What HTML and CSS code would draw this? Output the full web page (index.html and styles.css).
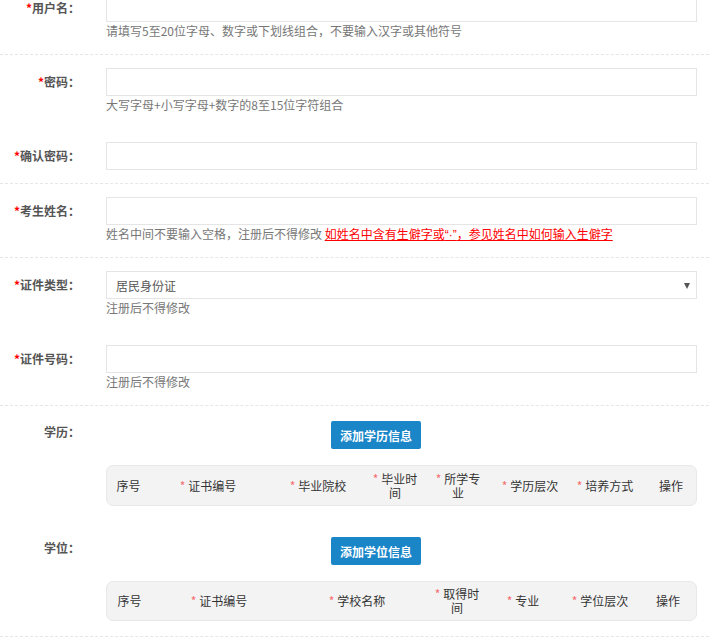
FILE: index.html
```html
<!DOCTYPE html>
<html lang="zh-CN">
<head>
    <meta charset="UTF-8">
    <meta name="viewport" content="width=device-width, initial-scale=1.0">
    <title>考生注册</title>
    <link rel="stylesheet" href="styles.css">
</head>
<body>
    <form class="reg-form">
        <div class="form-group">
            <div class="form-item">
                <label class="form-label"><span class="req">*</span>用户名：</label>
                <div class="form-field">
                    <input type="text" class="form-input">
                    <div class="form-hint">请填写5至20位字母、数字或下划线组合，不要输入汉字或其他符号</div>
                </div>
            </div>
        </div>

        <div class="form-group">
            <div class="form-item">
                <label class="form-label"><span class="req">*</span>密码：</label>
                <div class="form-field">
                    <input type="password" class="form-input">
                    <div class="form-hint">大写字母+小写字母+数字的8至15位字符组合</div>
                </div>
            </div>
            <div class="form-item">
                <label class="form-label"><span class="req">*</span>确认密码：</label>
                <div class="form-field">
                    <input type="password" class="form-input">
                </div>
            </div>
        </div>

        <div class="form-group">
            <div class="form-item">
                <label class="form-label"><span class="req">*</span>考生姓名：</label>
                <div class="form-field">
                    <input type="text" class="form-input">
                    <div class="form-hint">姓名中间不要输入空格，注册后不得修改 <a href="#" class="hint-link">如姓名中含有生僻字或<span class="quote">“·”</span>，参见姓名中如何输入生僻字</a></div>
                </div>
            </div>
        </div>

        <div class="form-group">
            <div class="form-item">
                <label class="form-label"><span class="req">*</span>证件类型：</label>
                <div class="form-field">
                    <div class="select-wrap">
                        <select class="form-input form-select">
                            <option>居民身份证</option>
                            <option>护照</option>
                            <option>港澳台居民居住证</option>
                        </select>
                        <span class="select-arrow"></span>
                    </div>
                    <div class="form-hint">注册后不得修改</div>
                </div>
            </div>
            <div class="form-item">
                <label class="form-label"><span class="req">*</span>证件号码：</label>
                <div class="form-field">
                    <input type="text" class="form-input">
                    <div class="form-hint">注册后不得修改</div>
                </div>
            </div>
        </div>

        <div class="form-group form-group-edu">
            <div class="form-item form-item-edu">
                <label class="form-label">学历：</label>
                <div class="form-field">
                    <button type="button" class="add-button">添加学历信息</button>
                    <div class="info-table edu-table">
                        <div class="cell"><span>序号</span></div>
                        <div class="cell"><span><span class="star">*</span> 证书编号</span></div>
                        <div class="cell"><span><span class="star">*</span> 毕业院校</span></div>
                        <div class="cell cell-narrow"><span><span class="star">*</span> 毕业时间</span></div>
                        <div class="cell cell-major"><span><span class="star">*</span> 所学专业</span></div>
                        <div class="cell"><span><span class="star">*</span> 学历层次</span></div>
                        <div class="cell"><span><span class="star">*</span> 培养方式</span></div>
                        <div class="cell"><span>操作</span></div>
                    </div>
                </div>
            </div>
            <div class="form-item">
                <label class="form-label">学位：</label>
                <div class="form-field">
                    <button type="button" class="add-button">添加学位信息</button>
                    <div class="info-table degree-table">
                        <div class="cell"><span>序号</span></div>
                        <div class="cell"><span><span class="star">*</span> 证书编号</span></div>
                        <div class="cell"><span><span class="star">*</span> 学校名称</span></div>
                        <div class="cell cell-time"><span><span class="star">*</span> 取得时间</span></div>
                        <div class="cell"><span><span class="star">*</span> 专业</span></div>
                        <div class="cell"><span><span class="star">*</span> 学位层次</span></div>
                        <div class="cell"><span>操作</span></div>
                    </div>
                </div>
            </div>
        </div>
    </form>
</body>
</html>
```

FILE: styles.css
```css
body {
    margin: 0;
    padding: 0;
    background-color: #fff;
    font-family: "Microsoft YaHei", "Noto Sans CJK SC", "Noto Sans", sans-serif;
    font-size: 12px;
    color: #555;
}
.reg-form {
    width: 709px;
    margin-top: -6px;
}
.form-group {
    padding: 13px 12px 13px 0;
    border-bottom: 1px dashed #e6e6e6;
}
.form-group:first-child {
    padding-top: 0;
}
.form-group-edu {
    padding-top: 15px;
    padding-bottom: 15px;
}
.form-group-edu .form-label {
    line-height: 22px;
}
.form-item {
    display: flex;
    align-items: flex-start;
}
.form-item + .form-item {
    margin-top: 28px;
}
.form-item-edu + .form-item {
    margin-top: 31px;
}
.form-item:last-child .form-hint {
    margin-bottom: 1px;
}
.form-label {
    width: 80px;
    margin-right: 26px;
    flex-shrink: 0;
    text-align: right;
    line-height: 28px;
    font-weight: bold;
    color: #555;
    white-space: nowrap;
}
.req {
    color: #f00;
}
.form-field {
    flex-grow: 1;
    min-width: 0;
}
.form-input {
    display: block;
    box-sizing: border-box;
    width: 100%;
    height: 28px;
    margin: 0;
    padding: 0 10px;
    border: 1px solid #e5e5e5;
    border-radius: 0;
    background-color: #fff;
    font-family: inherit;
    font-size: 12px;
    color: #555;
    outline: none;
}
.select-wrap {
    position: relative;
}
.form-select {
    appearance: none;
    -webkit-appearance: none;
    padding-left: 9px;
}
.select-arrow {
    position: absolute;
    right: 7px;
    top: 12px;
    width: 0;
    height: 0;
    border-left: 3px solid transparent;
    border-right: 3px solid transparent;
    border-top: 6px solid #555;
}
.form-hint {
    line-height: 18px;
    height: 18px;
    color: #777;
    white-space: nowrap;
}
.hint-link {
    color: #f00;
    text-decoration: underline;
}
.quote {
    font-family: "Liberation Sans", sans-serif;
}
.add-button {
    display: block;
    height: 28px;
    margin-left: 225px;
    padding: 0 9px;
    background-color: #1a86c8;
    color: #fff;
    border: none;
    border-radius: 2px;
    font-family: inherit;
    font-size: 12px;
    font-weight: bold;
    cursor: pointer;
}
.info-table {
    display: grid;
    margin-top: 16px;
    min-height: 41px;
    box-sizing: border-box;
    background-color: #f3f3f3;
    border: 1px solid #e8e8e8;
    border-radius: 7px;
    color: #333;
    line-height: 14px;
}
.edu-table {
    grid-template-columns: 43px 116px 104px 50px 76px 68px 82px 1fr;
}
.degree-table {
    grid-template-columns: 45px 134px 142px 58px 74px 80px 1fr;
    min-height: 40px;
}
.cell {
    display: flex;
    align-items: center;
    justify-content: center;
    text-align: center;
}
.cell-narrow {
    padding: 0 2px;
}
.cell-major {
    padding: 0 14px;
}
.cell-time {
    padding: 0 6px;
}
.star {
    color: #f56c6c;
}
```
